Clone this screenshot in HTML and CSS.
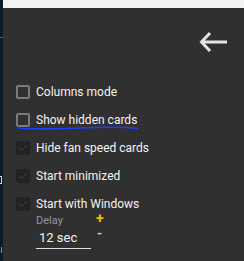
FILE: index.html
```html
<!DOCTYPE html>
<html lang="en">
<head>
  <meta charset="UTF-8">
  <title>Settings</title>
  <link rel="stylesheet" href="styles.css">
</head>
<body>

<div class="window">
  <div class="side-strip">
    <span class="strip-line"></span>
    <span class="strip-bit"></span>
    <span class="strip-mark"></span>
  </div>

  <div class="main">
    <div class="top-bar"></div>

    <div class="panel">
      <div class="panel-head">
        <button class="back-btn" aria-label="Back">
          <svg viewBox="0 0 28 22" width="28" height="22">
            <path d="M11 2 L2.5 11 L11 20 M3 11 H28" fill="none" stroke="#e4e4e4" stroke-width="3"/>
          </svg>
        </button>
      </div>

      <div class="options">
        <label class="option">
          <span class="box"></span>
          <span class="label">Columns mode</span>
        </label>
        <label class="option marked">
          <span class="box"></span>
          <span class="label">Show hidden cards</span>
          <!-- hand drawn underline -->
          <svg class="scribble" viewBox="0 0 122 4" width="122" height="4">
            <path d="M1 2 C20 3.5 40 3 60 2 C85 1 110 1 121 2.5" fill="none" stroke="#1740ff" stroke-width="1.6"/>
          </svg>
        </label>
        <label class="option">
          <span class="box checked"></span>
          <span class="label">Hide fan speed cards</span>
        </label>
        <label class="option">
          <span class="box checked"></span>
          <span class="label">Start minimized</span>
        </label>
        <label class="option">
          <span class="box checked"></span>
          <span class="label">Start with Windows</span>
        </label>
      </div>

      <div class="delay">
        <div class="delay-field">
          <span class="delay-label">Delay</span>
          <span class="delay-value">12 sec</span>
        </div>
        <div class="delay-buttons">
          <span class="plus">+</span>
          <span class="minus">-</span>
        </div>
      </div>
    </div>
  </div>
</div>

</body>
</html>
```

FILE: styles.css
```css
body {
  margin: 0;
  font-family: Roboto, "Liberation Sans", sans-serif;
  background: #303030;
}

.window {
  display: flex;
  width: 244px;
  height: 261px;
  overflow: hidden;
}

.side-strip {
  position: relative;
  width: 3px;
  background: #0e1a28;
  flex-shrink: 0;
}

.strip-line {
  position: absolute;
  left: 0;
  top: 37px;
  width: 3px;
  height: 1px;
  background: #3a6a9a;
}

.strip-bit {
  position: absolute;
  left: 0;
  top: 176px;
  width: 2px;
  height: 8px;
  border-right: 1px solid #d8d8d8;
  border-top: 1px solid #d8d8d8;
  border-bottom: 1px solid #d8d8d8;
  box-sizing: border-box;
}

.strip-mark {
  position: absolute;
  left: 1px;
  top: 247px;
  width: 1px;
  height: 6px;
  background: #8a9aa8;
}

.main {
  flex: 1;
  display: flex;
  flex-direction: column;
}

.top-bar {
  height: 8px;
  background: #f2f2f2;
}

.panel {
  flex: 1;
  background: #303030;
  padding: 0 13px;
}

.panel-head {
  display: flex;
  justify-content: flex-end;
  padding-top: 23px;
  height: 52px;
  box-sizing: border-box;
}

.back-btn {
  background: none;
  border: none;
  padding: 0;
  margin-right: 4px;
  height: 22px;
  cursor: pointer;
}

.back-btn svg {
  display: block;
}

.options {
  display: flex;
  flex-direction: column;
  padding-top: 18px;
}

.option {
  position: relative;
  display: flex;
  align-items: center;
  gap: 6px;
  height: 28px;
  color: #f2f2f2;
  font-size: 12px;
}

.box {
  width: 10px;
  height: 10px;
  border: 2px solid #7a7a7a;
  border-radius: 2px;
  position: relative;
}

.box.checked {
  border-color: #232323;
  background: #232323;
}

.box.checked::after {
  content: "";
  position: absolute;
  left: 3px;
  top: 0;
  width: 3px;
  height: 7px;
  border: solid #3e3e3e;
  border-width: 0 1.5px 1.5px 0;
  transform: rotate(45deg);
}

.scribble {
  position: absolute;
  left: 1px;
  top: 20px;
}

.delay {
  display: flex;
  gap: 5px;
  padding-left: 20px;
  margin-top: -4px;
}

.delay-field {
  display: flex;
  flex-direction: column;
  width: 55px;
  border-bottom: 1.5px solid #e0e0e0;
}

.delay-label {
  font-size: 11px;
  color: #8b97a3;
  line-height: 14px;
}

.delay-value {
  font-size: 13px;
  color: #f2f2f2;
  padding: 2px 0 3px 3px;
}

.delay-buttons {
  display: flex;
  flex-direction: column;
  font-weight: bold;
  line-height: 14px;
}

.plus {
  color: #f0c000;
  font-size: 14px;
  margin-top: -3px;
}

.minus {
  color: #d8d8d8;
  font-size: 13px;
  padding-left: 1px;
  margin-top: 2px;
}
```
